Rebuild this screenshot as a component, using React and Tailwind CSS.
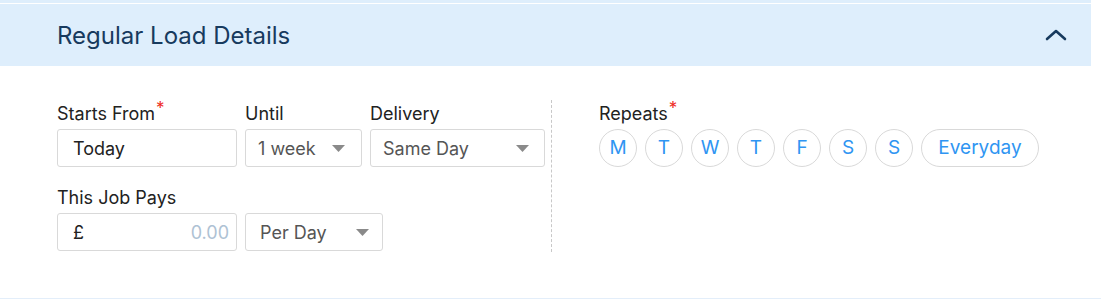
import { useState } from "react";

const Caret = () => (
    <svg width="13" height="7" viewBox="0 0 13 7" className="shrink-0">
        <path d="M0 0 L13 0 L6.5 7 Z" fill="#8a8a8a" />
    </svg>
);

const Select = ({ value, width, pad = "pl-3 pr-4" }) => (
    <div className={`flex h-[38px] items-center justify-between rounded-[3px] border border-[#d9d9d9] bg-white ${pad} ${width}`}>
        <span className="text-[18px] text-[#555]">{value}</span>
        <Caret />
    </div>
);

const Label = ({ children, required }) => (
    <label className="block h-[29px] text-[18px] leading-[27px] text-[#222]">
        {children}
        {required && <span className="relative -top-[6px] ml-[1px] text-[17px] text-[#ee2a22]">*</span>}
    </label>
);

const days = ["M", "T", "W", "T", "F", "S", "S"];

const App = () => {
    const [amount, setAmount] = useState("");

    return (
        <div className="h-[300px] w-[1101px] bg-white font-['Inter',sans-serif]">
            <div className="h-[3px] w-[1091px] bg-[#deeefc]" />
            <div className="h-px w-[1091px] bg-white" />
            <div className="flex h-[62px] w-[1091px] items-center justify-between bg-[#deeefc] pl-[57px] pr-[24px]">
                <h2 className="pt-[2px] text-[24px] text-[#173a5e]">Regular Load Details</h2>
                <svg width="22" height="14" viewBox="0 0 22 14">
                    <path d="M2 11 L11 3 L20 11" fill="none" stroke="#173a5e" strokeWidth="2.6" strokeLinecap="round" strokeLinejoin="round" />
                </svg>
            </div>

            <div className="flex h-[233px] border-b border-[#e3eefa] pl-[57px] pt-[34px]">
                <div className="flex flex-col gap-[17px]">
                    <div className="flex gap-2">
                        <div>
                            <Label required>Starts From</Label>
                            <div className="flex h-[38px] w-[180px] items-center rounded-[3px] border border-[#d9d9d9] px-[15px] text-[18px] text-[#222]">
                                Today
                            </div>
                        </div>
                        <div>
                            <Label>Until</Label>
                            <Select value="1 week" width="w-[117px]" />
                        </div>
                        <div>
                            <Label>Delivery</Label>
                            <Select value="Same Day" width="w-[175px]" pad="pl-3 pr-[15px]" />
                        </div>
                    </div>
                    <div className="flex gap-2">
                        <div>
                            <Label>This Job Pays</Label>
                            <div className="flex h-[38px] w-[180px] items-center rounded-[3px] border border-[#d9d9d9] pl-[15px] pr-[7px] text-[18px]">
                                <span className="text-[#222]">£</span>
                                <input
                                    value={amount}
                                    onChange={(e) => setAmount(e.target.value)}
                                    placeholder="0.00"
                                    className="w-full bg-transparent text-right outline-none placeholder:text-[#aec2d4]"
                                />
                            </div>
                        </div>
                        <div className="pt-[29px]">
                            <Select value="Per Day" width="w-[138px]" pad="pl-[14px] pr-[13px]" />
                        </div>
                    </div>
                </div>

                <div className="ml-[6px] h-[152px] border-l border-dashed border-[#c8c8c8]" />

                <div className="pl-[47px]">
                    <Label required>Repeats</Label>
                    <div className="flex gap-2">
                        {days.map((d, i) => (
                            <button
                                key={i}
                                className="flex h-[38px] w-[38px] items-center justify-center rounded-full border border-[#d9d9d9] text-[19px] text-[#2f95f2]"
                            >
                                {d}
                            </button>
                        ))}
                        <button className="flex h-[38px] w-[118px] items-center justify-center rounded-full border border-[#d9d9d9] text-[19px] text-[#2f95f2]">
                            Everyday
                        </button>
                    </div>
                </div>
            </div>
        </div>
    );
};

export default App;
